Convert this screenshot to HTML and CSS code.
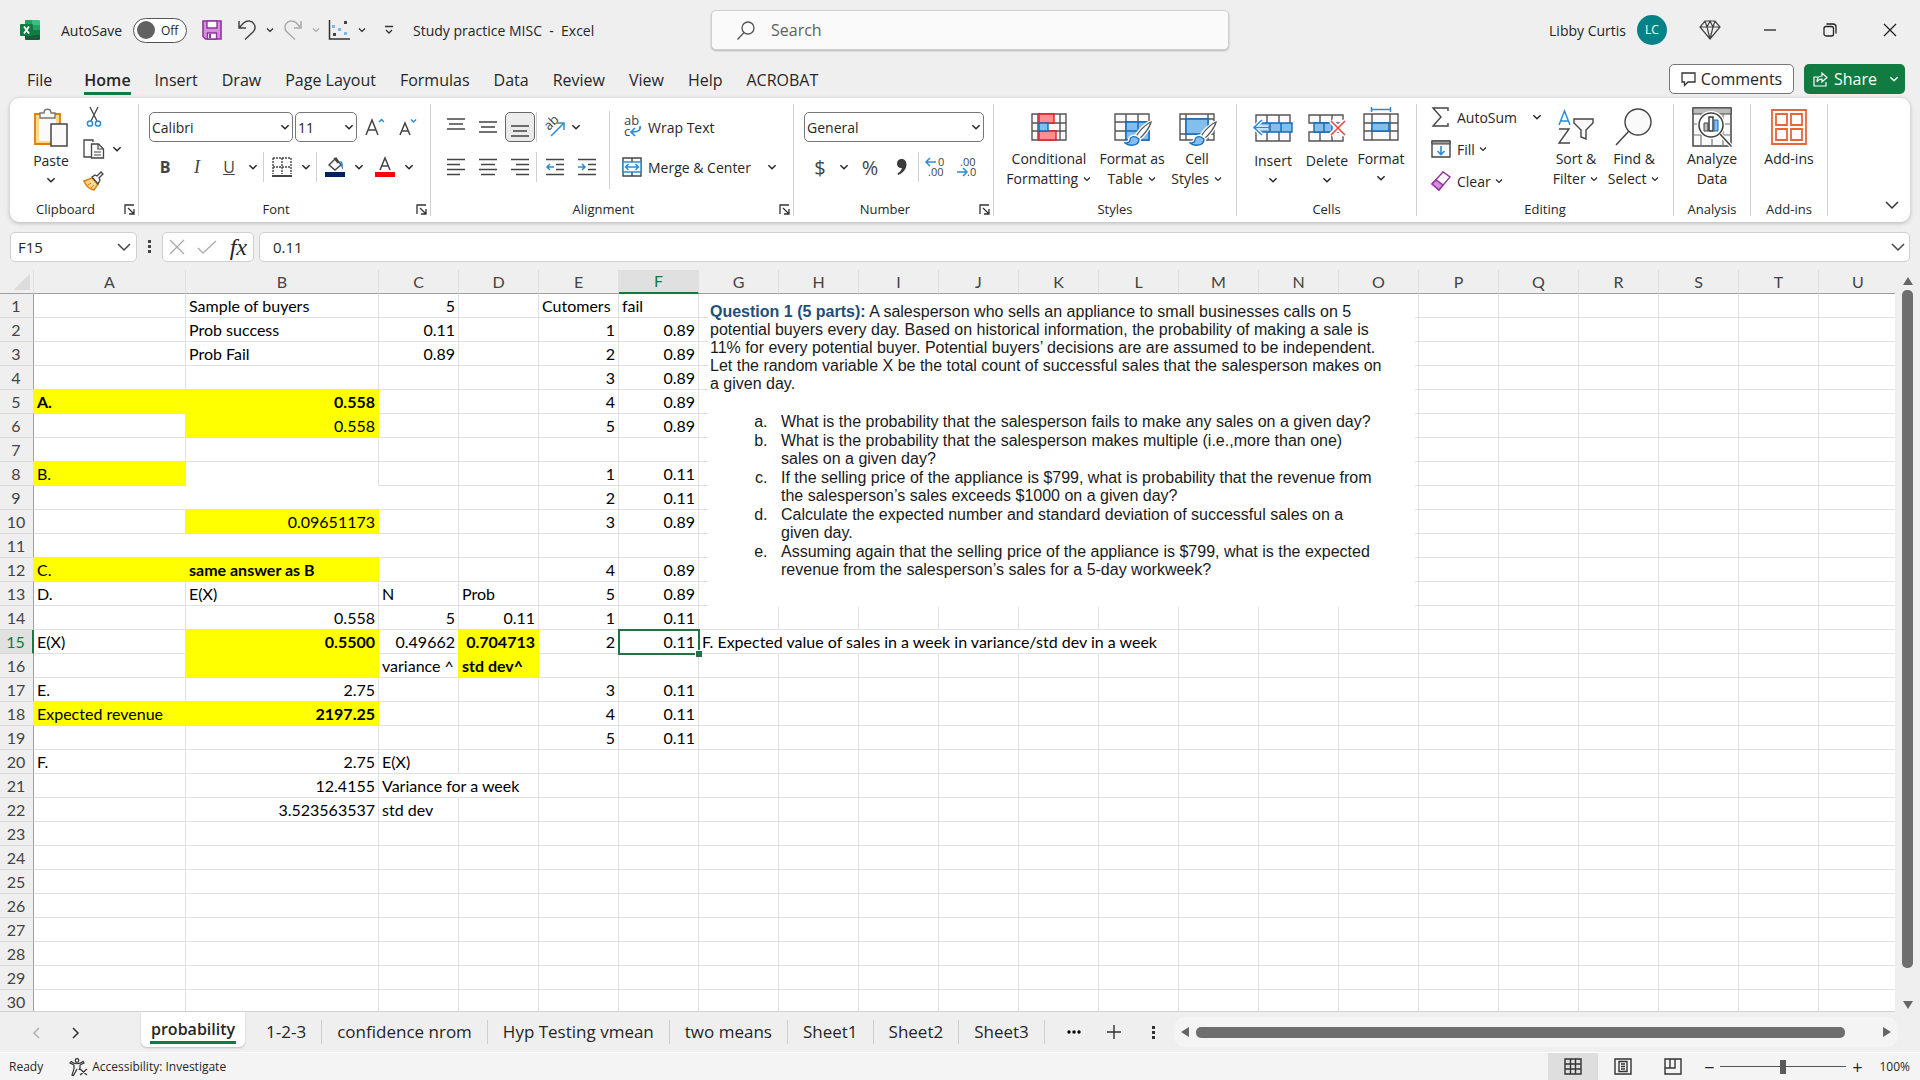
FILE: index.html
```
<!DOCTYPE html>
<html lang="en">
<head>
    <meta charset="UTF-8">
    <title>Study practice MISC - Excel</title>
    <link rel="stylesheet" href="styles.css">
</head>
<body>
    <!-- shared symbols -->
    <svg class="defs" width="0" height="0">
        <symbol id="chev" viewBox="0 0 10 10"><path d="M2 3.5l3 3 3-3" fill="none" stroke="currentColor" stroke-width="1.2"/></symbol>
        <symbol id="launch" viewBox="0 0 11 11"><path d="M1 10V1h9M4 4l6 6M10 5v5H5" fill="none" stroke="#333" stroke-width="1.3"/></symbol>
        <symbol id="brush" viewBox="0 0 28 26">
            <path d="M27 1C22 3 14 11 12 16l3 2C20 14 26 6 27 1z" fill="#fff" stroke="#fff" stroke-width="4"/>
            <path d="M27 1C22 3 14 11 12 16l3 2C20 14 26 6 27 1z" fill="#fff" stroke="#555" stroke-width="1.3"/>
            <path d="M12 16c-3-1-6 0-6 3 0 2-2 3-5 3 3 3 14 4 14-4z" fill="#83beec" stroke="#fff" stroke-width="4"/>
            <path d="M12 16c-3-1-6 0-6 3 0 2-2 3-5 3 3 3 14 4 14-4z" fill="#83beec" stroke="#0f6cbd" stroke-width="1.3"/>
        </symbol>
    </svg>

    <header class="titlebar">
        <div class="title-left">
            <svg class="logo" width="20" height="20" viewBox="0 0 20 20">
                <path d="M5 0h7v5H5z" fill="#21a366"/><path d="M12 0h7q1 0 1 1v4h-8z" fill="#33c481"/>
                <path d="M5 5h7v5H5z" fill="#107c41"/><path d="M12 5h8v5h-8z" fill="#21a366"/>
                <path d="M5 10h7v5H5z" fill="#185c37"/><path d="M12 10h8v5h-8z" fill="#107c41"/>
                <path d="M5 15h15v4q0 1-1 1H6q-1 0-1-1z" fill="#185c37"/>
                <rect y="4" width="13" height="12" rx="1" fill="#107c41"/>
                <path d="M4 6.500l5 7M9 6.500l-5 7" stroke="#fff" stroke-width="1.800"/>
            </svg>
            <label class="autosave">AutoSave
                <span class="toggle"><input type="checkbox"><i></i><span>Off</span></span>
            </label>
            <button class="qat save" aria-label="Save">
                <svg width="20" height="20" viewBox="0 0 20 20"><path d="M1 1h18v18H3.500L1 16.500z" fill="#d48fdc" stroke="#9332a0" stroke-width="1.600"/><path d="M5 1h10v7H5z" fill="#fff" stroke="#9332a0" stroke-width="1.400"/><path d="M5.500 19v-6h9v6z" fill="#fff" stroke="#9332a0" stroke-width="1.400"/><path d="M8 14v4" stroke="#9332a0" stroke-width="2"/></svg>
            </button>
            <button class="qat" aria-label="Undo">
                <svg width="20" height="20" viewBox="0 0 20 20"><path d="M2 1v7h7M2 8l4.500-5C10 0 15 .5 17 4s1 6-1 8l-8 7.500" fill="none" stroke="#444" stroke-width="1.500"/></svg>
            </button>
            <button class="mini" aria-label="Undo list"><svg width="10" height="10"><use href="#chev"/></svg></button>
            <button class="qat faded" aria-label="Redo">
                <svg width="20" height="20" viewBox="0 0 20 20"><path d="M18 1v7h-7M18 8l-4.500-5C10 0 5 .5 3 4s-1 6 1 8l8 7.500" fill="none" stroke="#aaa" stroke-width="1.500"/></svg>
            </button>
            <button class="mini faded" aria-label="Redo list"><svg width="10" height="10"><use href="#chev"/></svg></button>
            <button class="qat" aria-label="Scatter chart">
                <svg width="22" height="20" viewBox="0 0 22 20"><path d="M1.500 0v19H22" fill="none" stroke="#333" stroke-width="1.500"/><path d="M16 1h3v3h-3zM5 13h3v3H5z" fill="#444"/><path d="M4 5h3v3H4zM10 8h3v3h-3zM16 12h3v3h-3z" fill="#76b9ed"/></svg>
            </button>
            <button class="mini" aria-label="Scatter chart list"><svg width="10" height="10"><use href="#chev"/></svg></button>
            <button class="qat more" aria-label="Customize toolbar">
                <svg width="10" height="10" viewBox="0 0 10 10"><path d="M1 1.500h8M2 5l3 3 3-3" fill="none" stroke="#333" stroke-width="1.300"/></svg>
            </button>
            <span class="doc-title">Study practice MISC&nbsp; -&nbsp; Excel</span>
        </div>
        <label class="search">
            <svg width="18" height="19" viewBox="0 0 18 19"><circle cx="11" cy="7" r="6" fill="none" stroke="#555" stroke-width="1.300"/><path d="M7 11.500L.5 18.500" stroke="#555" stroke-width="1.300"/></svg>
            <input type="text" placeholder="Search" aria-label="Search">
        </label>
        <div class="title-right">
            <span class="user">Libby Curtis</span>
            <span class="avatar">LC</span>
            <button class="win" aria-label="Premium"><svg width="22" height="20" viewBox="0 0 22 20"><path d="M6 1h10l5 6-10 12L1 7zM1 7h20M6 1l2 6 3 12 3-12 2-6M8 7l3-6 3 6" fill="none" stroke="#444" stroke-width="1.200"/></svg></button>
            <button class="win" aria-label="Minimize"><svg width="12" height="12"><path d="M0 6h12" stroke="#222" stroke-width="1.300"/></svg></button>
            <button class="win" aria-label="Restore"><svg width="14" height="14" viewBox="0 0 14 14"><rect x="1" y="3.500" width="9.500" height="9.500" rx="2" fill="none" stroke="#222" stroke-width="1.300"/><path d="M3.500 1H10q3 0 3 3v6.500" fill="none" stroke="#222" stroke-width="1.300"/></svg></button>
            <button class="win" aria-label="Close"><svg width="14" height="14"><path d="M1 1l12 12M13 1L1 13" stroke="#222" stroke-width="1.300"/></svg></button>
        </div>
    </header>

    <nav class="menu">
        <a href="#" class="file">File</a>
        <a href="#" class="on">Home</a>
        <a href="#">Insert</a>
        <a href="#">Draw</a>
        <a href="#">Page Layout</a>
        <a href="#">Formulas</a>
        <a href="#">Data</a>
        <a href="#">Review</a>
        <a href="#">View</a>
        <a href="#">Help</a>
        <a href="#">ACROBAT</a>
        <button class="comments"><svg width="15" height="15" viewBox="0 0 15 15"><path d="M1 1h13v9H7l-3.500 3.500V10H1z" fill="none" stroke="#333" stroke-width="1.300"/></svg>Comments</button>
        <button class="share"><svg width="15" height="15" viewBox="0 0 15 15"><path d="M5 5H1v9h12v-4M4 10c0-4 2-6 5-6V1l5 4.500L9 10V7c-2 0-4 1-5 3z" fill="none" stroke="#fff" stroke-width="1.200"/></svg>Share<svg class="share-chev" width="12" height="12"><use href="#chev"/></svg></button>
    </nav>

    <section class="ribbon">
        <div class="group g-clip">
            <div class="tools">
                <button class="big low">
                    <span class="pic"><svg width="36" height="40" viewBox="0 0 36 40"><path d="M2 6h25v30H2z" fill="#ffd98f" stroke="#e07b10" stroke-width="1.800"/><path d="M6 8h17v25H6z" fill="#fafafa"/><path d="M7 10V5h4c0-5 7-5 7 0h4v5z" fill="#fafafa" stroke="#777" stroke-width="1.400"/><path d="M18 16h16v22H18z" fill="#fafafa" stroke="#444" stroke-width="1.500"/></svg></span>
                    Paste<br><svg width="12" height="12"><use href="#chev"/></svg>
                </button>
                <div class="stack">
                    <button class="row-btn" aria-label="Cut"><svg width="16" height="22" viewBox="0 0 16 22"><path d="M4 1l7 14M12 1L5 15" fill="none" stroke="#444" stroke-width="1.300"/><circle cx="4" cy="17.500" r="2.600" fill="none" stroke="#2a8dd4" stroke-width="1.500"/><circle cx="12" cy="17.500" r="2.600" fill="none" stroke="#2a8dd4" stroke-width="1.500"/></svg></button>
                    <button class="row-btn" aria-label="Copy"><svg width="22" height="20" viewBox="0 0 22 20"><path d="M8 18H1V1h9v2" fill="none" stroke="#444" stroke-width="1.300"/><path d="M8.500 5h7l5 5v9h-12z" fill="#fafafa" stroke="#444" stroke-width="1.300"/><path d="M15 5v5h5M11 13h7M11 16h7" fill="none" stroke="#444" stroke-width="1.200"/></svg><svg class="copy-chev" width="12" height="12"><use href="#chev"/></svg></button>
                    <button class="row-btn" aria-label="Format painter"><svg width="22" height="20" viewBox="0 0 22 20"><path d="M1 10l8-3 6 6-4 6c-5-1-8-4-10-9z" fill="#ffd98f" stroke="#e07b10" stroke-width="1.500"/><path d="M5 14l3-2M8 17l3-3" stroke="#e07b10"/><path d="M9 6l3-2 2 1 4-4 2 2-4 4 1 2-2 4z" fill="#fafafa" stroke="#444" stroke-width="1.300"/></svg></button>
                </div>
            </div>
            <div class="group-name"><span>Clipboard</span><button aria-label="Clipboard options"><svg width="11" height="11"><use href="#launch"/></svg></button></div>
        </div>

        <div class="group g-font">
            <div class="tools lines">
                <div class="line">
                    <span class="pick font-pick"><select aria-label="Font"><option>Calibri</option></select><svg width="12" height="12"><use href="#chev"/></svg></span>
                    <span class="pick size-pick"><select aria-label="Font size"><option>11</option></select><svg width="12" height="12"><use href="#chev"/></svg></span>
                    <button class="ic" aria-label="Grow font"><svg width="20" height="20" viewBox="0 0 20 20"><path d="M1 18L7 3l6 15M3 13h8" fill="none" stroke="#444" stroke-width="1.500"/><path d="M14 5l2.500-2.500L19 5" fill="none" stroke="#2a8dd4" stroke-width="1.500"/></svg></button>
                    <button class="ic" aria-label="Shrink font"><svg width="20" height="20" viewBox="0 0 20 20"><path d="M3 18L8 6l5 12M5 14h6" fill="none" stroke="#444" stroke-width="1.500"/><path d="M14 2.500L16.500 5 19 2.500" fill="none" stroke="#2a8dd4" stroke-width="1.500"/></svg></button>
                </div>
                <div class="line">
                    <button class="ic"><b>B</b></button>
                    <button class="ic"><i class="ital">I</i></button>
                    <button class="ic"><u>U</u></button>
                    <button class="mini" aria-label="Underline list"><svg width="12" height="12"><use href="#chev"/></svg></button>
                    <span class="bar"></span>
                    <button class="ic" aria-label="Borders"><svg width="20" height="20" viewBox="0 0 20 20"><path d="M1 1h18M1 10h18M1 1v16M10 1v16M19 1v16" fill="none" stroke="#444" stroke-width="1.400" stroke-dasharray="2 1"/><path d="M0 19h20" stroke="#444" stroke-width="2"/></svg></button>
                    <button class="mini" aria-label="Borders list"><svg width="12" height="12"><use href="#chev"/></svg></button>
                    <span class="bar"></span>
                    <button class="ic" aria-label="Fill color"><svg width="20" height="20" viewBox="0 0 20 20"><path d="M4 8l7-7 5 7-6 5zM9 1l4 5" fill="#fafafa" stroke="#444" stroke-width="1.400"/><path d="M15 4c3 0 3 3 3 9-2-2-2-5-3-9z" fill="#2a8dd4"/><path d="M0 15h20v5H0z" fill="#002060"/></svg></button>
                    <button class="mini" aria-label="Fill list"><svg width="12" height="12"><use href="#chev"/></svg></button>
                    <button class="ic font-color" aria-label="Font color"><svg width="20" height="20" viewBox="0 0 20 20"><path d="M5 13l5-12 5 12M7 9h6" fill="none" stroke="#444" stroke-width="1.500"/><path d="M0 15h20v5H0z" fill="#f00"/></svg></button>
                    <button class="mini" aria-label="Font color list"><svg width="12" height="12"><use href="#chev"/></svg></button>
                </div>
            </div>
            <div class="group-name"><span>Font</span><button aria-label="Font options"><svg width="11" height="11"><use href="#launch"/></svg></button></div>
        </div>

        <div class="group g-align">
            <div class="tools">
                <div class="lines align-left">
                    <div class="line">
                        <button class="ic" aria-label="Top align"><svg width="18" height="20"><path d="M0 2h18M2 7h14M0 12h18" stroke="#444" stroke-width="1.400"/></svg></button>
                        <button class="ic" aria-label="Middle align"><svg width="18" height="20"><path d="M0 5h18M2 10h14M0 15h18" stroke="#444" stroke-width="1.400"/></svg></button>
                        <button class="ic pressed" aria-label="Bottom align"><svg width="18" height="20"><path d="M0 9h18M2 14h14M0 19h18" stroke="#444" stroke-width="1.400"/></svg></button>
                        <span class="bar"></span>
                        <button class="ic" aria-label="Orientation"><svg width="22" height="22" viewBox="0 0 22 22"><text x="5" y="15" transform="rotate(-45 5 15)" class="svg-ab">ab</text><path d="M7 20L19 8M13 7h7v7" fill="none" stroke="#2a8dd4" stroke-width="1.500"/></svg></button>
                        <button class="mini" aria-label="Orientation list"><svg width="12" height="12"><use href="#chev"/></svg></button>
                    </div>
                    <div class="line">
                        <button class="ic" aria-label="Align left"><svg width="18" height="18"><path d="M0 1.500h18M0 6.500h13M0 11.500h18M0 16.500h13" stroke="#444" stroke-width="1.500"/></svg></button>
                        <button class="ic" aria-label="Center"><svg width="18" height="18"><path d="M0 1.500h18M2 6.500h14M0 11.500h18M2 16.500h14" stroke="#444" stroke-width="1.500"/></svg></button>
                        <button class="ic" aria-label="Align right"><svg width="18" height="18"><path d="M0 1.500h18M5 6.500h13M0 11.500h18M5 16.500h13" stroke="#444" stroke-width="1.500"/></svg></button>
                        <span class="bar"></span>
                        <button class="ic" aria-label="Decrease indent"><svg width="18" height="18"><path d="M0 1.500h18M10 6.500h8M10 11.500h8M0 16.500h18" stroke="#444" stroke-width="1.500"/><path d="M8 9H1M4 6L1 9l3 3" fill="none" stroke="#2a8dd4" stroke-width="1.500"/></svg></button>
                        <button class="ic" aria-label="Increase indent"><svg width="18" height="18"><path d="M0 1.500h18M10 6.500h8M10 11.500h8M0 16.500h18" stroke="#444" stroke-width="1.500"/><path d="M0 9h7M4 6l3 3-3 3" fill="none" stroke="#2a8dd4" stroke-width="1.500"/></svg></button>
                    </div>
                </div>
                <span class="tall-bar"></span>
                <div class="lines align-right">
                    <button class="text-btn"><svg width="20" height="22" viewBox="0 0 20 22"><text x="2" y="9" class="svg-ab">ab</text><text x="2" y="20" class="svg-ab">c</text><path d="M18 10c1 5-3 6-8 6M13 12l-4 4 4 4" fill="none" stroke="#2a8dd4" stroke-width="1.700"/></svg>Wrap Text</button>
                    <button class="text-btn"><svg width="20" height="20" viewBox="0 0 20 20"><path d="M1 1h18v18H1zM10 1v18" fill="none" stroke="#444" stroke-width="1.400"/><path d="M1 5h18v10H1z" fill="#fafafa" stroke="#2a8dd4" stroke-width="1.500"/><path d="M4 10h12M6.500 7L3.500 10l3 3M13.500 7l3 3-3 3" fill="none" stroke="#2a8dd4" stroke-width="1.400"/></svg>Merge &amp; Center<svg class="push" width="12" height="12"><use href="#chev"/></svg></button>
                </div>
            </div>
            <div class="group-name"><span>Alignment</span><button aria-label="Alignment options"><svg width="11" height="11"><use href="#launch"/></svg></button></div>
        </div>

        <div class="group g-num">
            <div class="tools lines">
                <div class="line">
                    <span class="pick num-pick"><select aria-label="Number format"><option>General</option></select><svg width="12" height="12"><use href="#chev"/></svg></span>
                </div>
                <div class="line">
                    <button class="ic sign">$</button>
                    <button class="mini" aria-label="Currency list"><svg width="12" height="12"><use href="#chev"/></svg></button>
                    <button class="ic sign pct">%</button>
                    <button class="ic" aria-label="Comma style"><svg width="10" height="16" viewBox="0 0 10 16"><path d="M4.500 0C8 0 9.500 2.500 9.500 5.500 9.500 10 6 14 1 16l-.5-1.500C3 13 4.500 11 5 9 2 9.500 0 7.500 0 4.800 0 2 2 0 4.500 0z" fill="#3a3a3a"/></svg></button>
                    <span class="bar"></span>
                    <button class="ic" aria-label="Increase decimal"><svg width="20" height="22" viewBox="0 0 20 22"><text x="13" y="10" class="svg-num">0</text><text x="3" y="20" class="svg-num">.00</text><path d="M11 6H1M5 2L1 6l4 4" fill="none" stroke="#2a8dd4" stroke-width="1.500"/></svg></button>
                    <button class="ic" aria-label="Decrease decimal"><svg width="20" height="22" viewBox="0 0 20 22"><text x="3" y="10" class="svg-num">.00</text><text x="10" y="20" class="svg-num">.0</text><path d="M0 16h10M6 12l4 4-4 4" fill="none" stroke="#2a8dd4" stroke-width="1.500"/></svg></button>
                </div>
            </div>
            <div class="group-name"><span>Number</span><button aria-label="Number options"><svg width="11" height="11"><use href="#launch"/></svg></button></div>
        </div>

        <div class="group g-styles">
            <div class="tools">
                <button class="big w-cond">
                    <span class="pic"><svg width="36" height="30" viewBox="0 0 36 30"><path d="M1 2h34v26H1zM7 2v26M29 2v26M1 11h34M1 19h34" fill="#fafafa" stroke="#555" stroke-width="1.400"/><path d="M8 2h15v9H8zM8 19h17v9H8z" fill="#ff8f8f" stroke="#e02020" stroke-width="1.400"/><path d="M8 11h9v8H8z" fill="#83beec" stroke="#0f6cbd" stroke-width="1.400"/></svg></span>
                    Conditional<br>Formatting <svg width="10" height="10"><use href="#chev"/></svg>
                </button>
                <button class="big w-table">
                    <span class="pic"><svg width="36" height="36" viewBox="0 0 36 36"><path d="M1 5h34v26H1zM12 5v26M24 5v26M1 13h34M1 22h34" fill="#fafafa" stroke="#555" stroke-width="1.400"/><path d="M12 13h23v18H12zM24 13v18M12 22h23" fill="#83beec" stroke="#0f6cbd" stroke-width="1.400"/><use href="#brush" x="10" y="12" width="28" height="26"/></svg></span>
                    Format as<br>Table <svg width="10" height="10"><use href="#chev"/></svg>
                </button>
                <button class="big w-cell">
                    <span class="pic"><svg width="36" height="36" viewBox="0 0 36 36"><path d="M1 5h34v26H1zM7 5v26M29 5v26M1 10h34M1 25h34" fill="#fafafa" stroke="#555" stroke-width="1.400"/><path d="M7 10h22v15H7z" fill="#83beec" stroke="#0f6cbd" stroke-width="1.400"/><use href="#brush" x="10" y="12" width="28" height="26"/></svg></span>
                    Cell<br>Styles <svg width="10" height="10"><use href="#chev"/></svg>
                </button>
            </div>
            <div class="group-name"><span>Styles</span></div>
        </div>

        <div class="group g-cells">
            <div class="tools">
                <button class="big low">
                    <span class="pic"><svg width="40" height="30" viewBox="0 0 40 30"><path d="M3 2h34v26H3zM14 2v26M26 2v26" fill="#fafafa" stroke="#555" stroke-width="1.400"/><path d="M6 10h33v9H6zM17 10v9M28 10v9" fill="#83beec" stroke="#0f6cbd" stroke-width="1.400"/><path d="M15 14.500H2M9 7l-8 7.500L9 22" fill="none" stroke="#fff" stroke-width="4"/><path d="M17 14.500H2M9 7l-8 7.500L9 22" fill="none" stroke="#2a8dd4" stroke-width="1.600"/></svg></span>
                    Insert<br><svg width="12" height="12"><use href="#chev"/></svg>
                </button>
                <button class="big low">
                    <span class="pic"><svg width="38" height="30" viewBox="0 0 38 30"><path d="M1 2h34v8H1zM1 19h34v9H1zM12 2v8M24 2v8M12 19v9M24 19v9" fill="#fafafa" stroke="#555" stroke-width="1.400"/><path d="M6 10h18v9H6zM16 10v9" fill="#83beec" stroke="#0f6cbd" stroke-width="1.400"/><path d="M23 8l14 14M37 8L23 22" stroke="#fff" stroke-width="5"/><path d="M23 8l14 14M37 8L23 22" stroke="#f04545" stroke-width="1.600"/></svg></span>
                    Delete<br><svg width="12" height="12"><use href="#chev"/></svg>
                </button>
                <button class="big">
                    <span class="pic"><svg width="36" height="40" viewBox="0 0 36 40"><path d="M1 7h34v26H1zM9 7v26M27 7v26M1 16h34M1 24h34" fill="#fafafa" stroke="#555" stroke-width="1.400"/><path d="M9 16h17v8H9z" fill="#83beec" stroke="#0f6cbd" stroke-width="1.400"/><path d="M9 2.500h18M8.500 0v5M27.500 0v5" stroke="#2a8dd4" stroke-width="1.500"/></svg></span>
                    Format<br><svg width="12" height="12"><use href="#chev"/></svg>
                </button>
            </div>
            <div class="group-name"><span>Cells</span></div>
        </div>

        <div class="group g-edit">
            <div class="tools">
                <div class="stack edit-stack">
                    <button class="text-btn"><svg width="20" height="20" viewBox="0 0 20 20"><path d="M17 4V1H2l8 9-8 9h15v-3" fill="none" stroke="#444" stroke-width="1.400"/></svg>AutoSum<svg class="push" width="12" height="12"><use href="#chev"/></svg></button>
                    <button class="text-btn"><svg width="20" height="18" viewBox="0 0 20 18"><path d="M1 1h18v16H1z" fill="#fafafa" stroke="#444" stroke-width="1.400"/><path d="M1 1h18v3H1z" fill="#999" stroke="#444"/><path d="M10 6v8M6.500 11l3.500 3.500 3.500-3.500" fill="none" stroke="#2a8dd4" stroke-width="1.600"/></svg>Fill<svg class="near" width="10" height="10"><use href="#chev"/></svg></button>
                    <button class="text-btn"><svg width="20" height="20" viewBox="0 0 20 20"><path d="M1 13L12 1l7 5L8 19z" fill="#fff" stroke="#9332a0" stroke-width="1.400"/><path d="M1 13l4-4 7 5-4 5z" fill="#d48fdc" stroke="#9332a0" stroke-width="1.400"/></svg>Clear<svg class="near" width="10" height="10"><use href="#chev"/></svg></button>
                </div>
                <button class="big w-sort">
                    <span class="pic"><svg width="36" height="36" viewBox="0 0 36 36"><path d="M1 16L6.500 2 12 16M3 12h7" fill="none" stroke="#2a8dd4" stroke-width="1.500"/><path d="M1 20h10L1 34h11" fill="none" stroke="#444" stroke-width="1.400"/><path d="M16 10h19v4l-7 7v9l-5-2v-7l-7-7z" fill="#fafafa" stroke="#444" stroke-width="1.400"/></svg></span>
                    Sort &amp;<br>Filter <svg width="10" height="10"><use href="#chev"/></svg>
                </button>
                <button class="big w-find">
                    <span class="pic"><svg width="38" height="38" viewBox="0 0 38 38"><circle cx="23" cy="14" r="13" fill="#fafafa" stroke="#444" stroke-width="1.400"/><path d="M14 23L1 37" stroke="#444" stroke-width="1.500"/></svg></span>
                    Find &amp;<br>Select <svg width="10" height="10"><use href="#chev"/></svg>
                </button>
            </div>
            <div class="group-name"><span>Editing</span></div>
        </div>

        <div class="group g-one">
            <div class="tools">
                <button class="big w-full">
                    <span class="pic"><svg width="40" height="40" viewBox="0 0 40 40"><path d="M1 1h38v38H1z" fill="#fafafa" stroke="#444" stroke-width="1.500"/><path d="M1 1h38v6H1z" fill="#bbb" stroke="#444"/><path d="M1 17h38M1 28h38M9 7v32M20 7v32M31 7v32" stroke="#777" stroke-width="1.200"/><circle cx="19" cy="18" r="14" fill="#fff"/><circle cx="19" cy="18" r="12" fill="#fff" stroke="#444" stroke-width="1.600"/><path d="M28 27l11 12" stroke="#fff" stroke-width="4"/><path d="M28 27l11 12" stroke="#444" stroke-width="1.600"/><path d="M12 16h4v8h-4z" fill="#bbb" stroke="#444"/><path d="M17 10h4v14h-4z" fill="#fafafa" stroke="#333" stroke-width="1.400"/><path d="M22 13h4v11h-4z" fill="#83beec" stroke="#0f6cbd"/></svg></span>
                    Analyze<br>Data
                </button>
            </div>
            <div class="group-name"><span>Analysis</span></div>
        </div>

        <div class="group g-one">
            <div class="tools">
                <button class="big w-full">
                    <span class="pic"><svg width="36" height="36" viewBox="0 0 36 36"><path d="M1 1h34v34H1zM5 5h11v11H5zM20 5h11v11H20zM5 20h11v11H5zM20 20h11v11H20z" fill="#fff" stroke="#e8653a" stroke-width="1.800"/></svg></span>
                    Add-ins
                </button>
            </div>
            <div class="group-name"><span>Add-ins</span></div>
        </div>

        <button class="collapse" aria-label="Collapse ribbon"><svg width="14" height="10" viewBox="0 0 14 10"><path d="M1 2l6 6 6-6" fill="none" stroke="#333" stroke-width="1.500"/></svg></button>
    </section>

    <section class="formula-row">
        <div class="name-box">
            <input type="text" value="F15" aria-label="Name box">
            <svg width="14" height="10" viewBox="0 0 14 10"><path d="M1 2l6 6 6-6" fill="none" stroke="#444" stroke-width="1.500"/></svg>
        </div>
        <svg class="dots" width="4" height="16"><path d="M0 1h3v3H0zM0 6h3v3H0zM0 11h3v3H0z" fill="#444"/></svg>
        <div class="fx-box">
            <button aria-label="Cancel"><svg width="16" height="16"><path d="M1 1l14 14M15 1L1 15" stroke="#aaa" stroke-width="1.300"/></svg></button>
            <button aria-label="Enter"><svg width="20" height="14"><path d="M1 8l5 5L19 1" fill="none" stroke="#aaa" stroke-width="1.300"/></svg></button>
            <button class="fx">fx</button>
        </div>
        <div class="formula-box">
            <input type="text" value="0.11" aria-label="Formula">
            <svg width="14" height="10" viewBox="0 0 14 10"><path d="M1 2l6 6 6-6" fill="none" stroke="#444" stroke-width="1.500"/></svg>
        </div>
    </section>

    <main class="work">
        <div class="sheet">
            <table id="grid"></table>
            <article class="question">
                <p><strong>Question 1 (5 parts):</strong> A salesperson who sells an appliance to small businesses calls on 5<br>
                potential buyers every day. Based on historical information, the probability of making a sale is<br>
                11% for every potential buyer. Potential buyers’ decisions are are assumed to be independent.<br>
                Let the random variable X be the total count of successful sales that the salesperson makes on<br>
                a given day.</p>
                <ol>
                    <li>What is the probability that the salesperson fails to make any sales on a given day?</li>
                    <li>What is the probability that the salesperson makes multiple (i.e.,more than one)<br>sales on a given day?</li>
                    <li>If the selling price of the appliance is $799, what is probability that the revenue from<br>the salesperson’s sales exceeds $1000 on a given day?</li>
                    <li>Calculate the expected number and standard deviation of successful sales on a<br>given day.</li>
                    <li>Assuming again that the selling price of the appliance is $799, what is the expected<br>revenue from the salesperson’s sales for a 5-day workweek?</li>
                </ol>
            </article>
        </div>
        <div class="vscroll">
            <svg width="12" height="10"><path d="M6 1l5 8H1z" fill="#666"/></svg>
            <span class="vthumb"></span>
            <svg width="12" height="10"><path d="M6 9l5-8H1z" fill="#666"/></svg>
        </div>
    </main>

    <nav class="sheets">
        <button class="nav-arrow" aria-label="Previous sheet"><svg width="8" height="12"><path d="M7 1L2 6l5 5" fill="none" stroke="#aaa" stroke-width="1.300"/></svg></button>
        <button class="nav-arrow" aria-label="Next sheet"><svg width="8" height="12"><path d="M1 1l5 5-5 5" fill="none" stroke="#333" stroke-width="1.500"/></svg></button>
        <a href="#" class="tab current"><span>probability</span></a>
        <a href="#" class="tab">1-2-3</a>
        <a href="#" class="tab">confidence nrom</a>
        <a href="#" class="tab">Hyp Testing vmean</a>
        <a href="#" class="tab">two means</a>
        <a href="#" class="tab">Sheet1</a>
        <a href="#" class="tab">Sheet2</a>
        <a href="#" class="tab">Sheet3</a>
        <div class="sheet-tools">
            <button class="sheet-btn" aria-label="More sheets"><svg width="14" height="4"><circle cx="2" cy="2" r="1.700"/><circle cx="7" cy="2" r="1.700"/><circle cx="12" cy="2" r="1.700"/></svg></button>
            <button class="sheet-btn" aria-label="New sheet"><svg width="14" height="14"><path d="M7 0v14M0 7h14" stroke="#333" stroke-width="1.400"/></svg></button>
            <span class="sheet-btn"><svg width="4" height="14"><path d="M0 1h3v3H0zM0 6h3v3H0zM0 11h3v3H0z" fill="#333"/></svg></span>
        </div>
        <div class="hscroll">
            <svg width="10" height="12"><path d="M1 6l8-5v10z" fill="#666"/></svg>
            <span class="hthumb"></span>
            <svg width="10" height="12"><path d="M9 6L1 1v10z" fill="#666"/></svg>
        </div>
    </nav>

    <footer class="status">
        <span>Ready</span>
        <button class="access"><svg width="18" height="18" viewBox="0 0 18 18"><circle cx="7" cy="2.500" r="1.800" fill="none" stroke="#333" stroke-width="1.200"/><path d="M1 3.500c3 3 9 3 12 0l1 1.500-4 2v3l-1 2M1 3.500L0 5l4 2v4l-2 6 1.500.5L7 11M10 11l7 6M17 11l-7 6" fill="none" stroke="#333" stroke-width="1.200"/></svg>Accessibility: Investigate</button>
        <div class="views">
            <button class="view on" aria-label="Normal view"><svg width="18" height="17"><path d="M1 1h16v15H1zM6.500 1v15M11.500 1v15M1 6h16M1 11h16" fill="none" stroke="#333" stroke-width="1.400"/></svg></button>
            <button class="view" aria-label="Page layout view"><svg width="18" height="17"><path d="M1 1h16v15H1zM5 3.500h8v10H5zM7 6h4M7 8.500h4M7 11h4" fill="none" stroke="#333" stroke-width="1.400"/></svg></button>
            <button class="view" aria-label="Page break view"><svg width="18" height="17"><path d="M1 1h16v15H1zM1 10h10V1M6 1v9" fill="none" stroke="#333" stroke-width="1.400"/></svg></button>
        </div>
        <button class="zoom-btn">−</button>
        <input class="zoom" type="range" min="0" max="100" value="50" aria-label="Zoom">
        <button class="zoom-btn">+</button>
        <span class="percent">100%</span>
    </footer>

    <script src="sheet.js"></script>
</body>
</html>
```
FILE: styles.css
```
* {
    box-sizing: border-box;
}
body {
    margin: 0;
    height: 100vh;
    display: flex;
    flex-direction: column;
    overflow: hidden;
    background-color: #efefef;
    color: #262626;
    font-family: "Open Sans", "Noto Sans", sans-serif;
    font-size: 14px;
}
button {
    border: none;
    background: none;
    padding: 0;
    margin: 0;
    font: inherit;
    color: inherit;
    white-space: nowrap;
}
a {
    color: inherit;
    text-decoration: none;
    white-space: nowrap;
}
input, select {
    font: inherit;
    color: inherit;
}
svg {
    flex: none;
    overflow: visible;
}
.defs {
    position: absolute;
}

/* title bar */
.titlebar {
    display: flex;
    align-items: center;
    height: 60px;
    flex: none;
}
.title-left {
    display: flex;
    align-items: center;
    width: 711px;
    padding-left: 20px;
}
.autosave {
    display: flex;
    align-items: center;
    gap: 8px;
    margin-left: 21px;
    width: 126px;
    justify-content: space-between;
}
.toggle {
    display: flex;
    align-items: center;
    width: 54px;
    height: 25px;
    padding-left: 3px;
    border: 1px solid #555;
    border-radius: 13px;
    background-color: #fff;
    font-size: 12px;
    gap: 6px;
}
.toggle input {
    appearance: none;
    margin: 0;
    width: 0;
}
.toggle i {
    width: 18px;
    height: 18px;
    margin-left: -6px;
    border-radius: 50%;
    background-color: #616161;
}
.qat {
    width: 30px;
    height: 30px;
    display: flex;
    align-items: center;
    justify-content: center;
}
.save {
    margin-left: 10px;
    margin-right: 5px;
}
.mini {
    width: 16px;
    height: 30px;
    display: flex;
    align-items: center;
    justify-content: center;
}
.faded {
    color: #aaa;
}
.title-left .qat.more {
    margin-left: 4px;
}
.doc-title {
    margin-left: 9px;
    white-space: pre;
}
.search {
    display: flex;
    align-items: center;
    flex: 1;
    max-width: 518px;
    height: 40px;
    padding-left: 25px;
    gap: 16px;
    background-color: #fafafa;
    border: 1px solid #d0d0d0;
    border-radius: 5px;
    box-shadow: 0 1px 2px rgba(0,0,0,0.25);
}
.search input {
    border: none;
    background: none;
    outline: none;
    flex: 1;
    padding: 0;
    font-size: 16px;
}
.search input::placeholder {
    color: #616161;
}
.title-right {
    display: flex;
    align-items: center;
    margin-left: auto;
}
.user {
    margin-right: 11px;
}
.avatar {
    width: 30px;
    height: 30px;
    line-height: 30px;
    margin-right: 13px;
    border-radius: 50%;
    background-color: #038387;
    color: #fff;
    font-size: 12px;
    text-align: center;
}
.win {
    width: 60px;
    height: 40px;
    display: flex;
    align-items: center;
    justify-content: center;
}

/* menu */
.menu {
    display: flex;
    align-items: center;
    gap: 24px;
    height: 38px;
    padding: 0 15px 0 27px;
    flex: none;
    font-size: 16px;
}
.menu a {
    height: 31px;
    line-height: 33px;
}
.menu .file {
    margin-right: 8px;
}
.menu .on {
    font-weight: 600;
    border-bottom: 3px solid #107c41;
}
.comments, .share {
    display: flex;
    align-items: center;
    height: 30px;
    border-radius: 5px;
}
.comments {
    margin-left: auto;
    margin-right: -14px;
    width: 125px;
    justify-content: center;
    gap: 5px;
    border: 1px solid #777;
    background-color: #fff;
}
.share {
    width: 101px;
    padding: 0 5px 0 9px;
    gap: 6px;
    background-color: #107c41;
    color: #fff;
}
.share-chev {
    margin-left: auto;
}

/* ribbon */
.ribbon {
    display: flex;
    position: relative;
    flex: none;
    height: 124px;
    margin: 0 10px;
    padding: 6px 0;
    background-color: #fff;
    border-radius: 9px;
    box-shadow: 0 1px 4px rgba(0,0,0,0.25);
}
.group {
    display: flex;
    flex-direction: column;
    justify-content: space-between;
    border-right: 1px solid #d0d0d0;
}
.g-clip { width: 129px; }
.g-font { width: 292px; }
.g-align { width: 363px; }
.g-num { width: 200px; }
.g-styles { width: 243px; }
.g-cells { width: 180px; }
.g-edit { width: 257px; }
.g-one { width: 77px; }
.tools {
    display: flex;
}
.g-clip .tools { padding-left: 10px; }
.g-font .tools { padding-left: 10px; }
.g-align .tools { padding-left: 9px; }
.g-num .tools { padding-left: 10px; }
.g-styles .tools { padding-left: 8px; }
.g-cells .tools { padding-left: 9px; }
.g-edit .tools { padding-left: 14px; }
.group-name {
    display: flex;
    align-items: center;
    height: 14px;
    font-size: 13px;
    line-height: 14px;
}
.group-name span {
    flex: 1;
    text-align: center;
}
.group-name button {
    display: flex;
    justify-content: center;
    width: 17px;
}
.big {
    width: 54px;
    line-height: 20px;
    text-align: center;
    align-self: flex-start;
}
.g-clip .big { width: 62px; }
.w-cond { width: 94px; }
.w-table { width: 72px; }
.w-cell { width: 58px; }
.w-sort { width: 56px; }
.w-find { width: 60px; }
.w-full { width: 100%; }
.pic {
    display: flex;
    align-items: center;
    justify-content: center;
    height: 45px;
}
.low .pic {
    height: 47px;
}
.stack {
    display: flex;
    flex-direction: column;
    gap: 6px;
}
.row-btn {
    display: flex;
    align-items: center;
    height: 26px;
}
.row-btn svg:first-child {
    width: 24px;
}
.copy-chev {
    margin-left: 5px;
}
.lines {
    display: flex;
    flex-direction: column;
    gap: 10px;
    padding-top: 8px;
}
.line {
    display: flex;
    align-items: center;
    height: 30px;
}
.ic {
    width: 32px;
    height: 30px;
    display: flex;
    align-items: center;
    justify-content: center;
    font-size: 16px;
    color: #444;
}
.ital {
    font-family: "Liberation Serif", serif;
    font-size: 18px;
}
.sign {
    font-size: 20px;
}
.pct {
    margin-left: 2px;
}
.pressed {
    width: 30px;
    margin: 0 1px;
    border: 1px solid #666;
    border-radius: 5px;
    background-color: #ebebeb;
}
.bar {
    width: 1px;
    height: 30px;
    margin: 0 2px;
    background-color: #d0d0d0;
}
.g-num .bar {
    margin: 0;
}
.font-color {
    margin-left: 2px;
}
.align-left .bar {
    margin: 0 2px 0 0;
}
.align-left {
    width: 169px;
}
.align-left .mini {
    margin-left: -3px;
}
.tall-bar {
    width: 1px;
    height: 78px;
    margin-top: 7px;
    background-color: #d0d0d0;
}
.align-right {
    flex: 1;
    padding-left: 12px;
    padding-right: 15px;
}
.text-btn {
    display: flex;
    align-items: center;
    height: 30px;
    gap: 6px;
}
.push {
    margin-left: auto;
}
.near {
    margin-left: -3px;
}
.edit-stack {
    width: 117px;
}
.edit-stack .text-btn {
    height: 26px;
    width: 112px;
}
.pick {
    position: relative;
    height: 30px;
    margin-right: 2px;
}
.pick select {
    appearance: none;
    width: 100%;
    height: 30px;
    padding: 0 2px;
    border: 1px solid #777;
    border-radius: 5px;
    background-color: #fff;
}
.pick svg {
    position: absolute;
    right: 2px;
    top: 9px;
    pointer-events: none;
}
.font-pick { width: 144px; }
.size-pick { width: 62px; }
.num-pick { width: 180px; }
.svg-ab {
    font-family: "Open Sans", sans-serif;
    font-size: 13px;
    fill: #444;
}
.svg-num {
    font-family: "Open Sans", sans-serif;
    font-size: 11px;
    fill: #444;
}
.collapse {
    margin: auto 11px 2px auto;
}

/* formula bar */
.formula-row {
    display: flex;
    align-items: center;
    flex: none;
    height: 48px;
    padding: 2px 10px 0;
    font-size: 15px;
}
.name-box, .fx-box, .formula-box {
    display: flex;
    align-items: center;
    height: 30px;
    border: 1px solid #d0d0d0;
    border-radius: 5px;
    background-color: #fff;
}
.name-box {
    width: 127px;
    padding: 0 5px 0 7px;
}
.name-box input, .formula-box input {
    flex: 1;
    width: 50px;
    padding: 0;
    border: none;
    outline: none;
    background: none;
}
.dots {
    margin: 0 10px 0 11px;
}
.fx-box {
    width: 92px;
    margin-right: 5px;
    padding: 0 6px;
    justify-content: space-between;
}
.fx-box button {
    display: flex;
}
.fx {
    font-family: "Liberation Serif", serif;
    font-style: italic;
    font-size: 24px;
    line-height: 24px;
}
.formula-box {
    flex: 1;
    padding: 0 4px 0 13px;
}

/* worksheet */
.work {
    display: flex;
    flex: 1;
    min-height: 0;
}
.sheet {
    position: relative;
    flex: 1;
    overflow: hidden;
    border-bottom: 1px solid #d0d0d0;
    background-color: #fff;
}
#grid {
    table-layout: fixed;
    width: calc(100% + 3px);
    border-spacing: 0;
    font-family: Lato, "Noto Sans", sans-serif;
    font-size: 16px;
    line-height: 20px;
    color: #000;
}
#grid th {
    height: 24px;
    padding: 0;
    font-weight: normal;
    color: #444;
    background-color: #efefef;
    border-right: 1px solid #e0e0e0;
    border-bottom: 1px solid #a0a0a0;
}
#grid tbody th {
    border-right-color: #a0a0a0;
    border-bottom-color: #d8d8d8;
    padding-right: 1px;
}
#grid .corner {
    background: linear-gradient(135deg, transparent 50%, #dcdcdc 50%) no-repeat 14px 4px / 16px 16px #efefef;
}
#grid thead .hot {
    background-color: #e0e0e0;
    color: #107c41;
    border-bottom: 2px solid #107c41;
}
#grid tbody .hot {
    background-color: #e0e0e0;
    color: #107c41;
    border-right: 2px solid #107c41;
}
#grid td {
    height: 24px;
    padding: 1px 3px 0 3px;
    white-space: nowrap;
    border-right: 1px solid #e0e0e0;
    border-bottom: 1px solid #e0e0e0;
}
#grid .num {
    text-align: right;
}
#grid .fill {
    background-color: #ff0;
    border-color: #ff0;
    box-shadow: -1px -1px 0 #ff0;
}
#grid .bold {
    font-weight: bold;
}
#grid .spill {
    border-right-color: transparent;
}
#grid .open {
    border-bottom-color: transparent;
}
#grid .active {
    position: relative;
    outline: 2px solid #217346;
    outline-offset: -1px;
}
#grid .active::after {
    content: "";
    position: absolute;
    right: -4px;
    bottom: -4px;
    width: 6px;
    height: 6px;
    border: 1px solid #fff;
    border-width: 1px 0 0 1px;
    background-color: #217346;
}
.question {
    position: absolute;
    left: 708px;
    top: 25px;
    width: 707px;
    height: 312px;
    padding: 8px 0 0 2px;
    background-color: #fff;
    color: #1a1a1a;
    font-family: "Liberation Sans", Arial, sans-serif;
    font-size: 16px;
    line-height: 18px;
    white-space: nowrap;
}
.question p {
    margin: 0 0 20px;
}
.question strong {
    color: #1f4e79;
}
.question ol {
    margin: 0;
    padding-left: 62px;
    list-style: lower-alpha;
}
.question li {
    margin-bottom: 1px;
    padding-left: 9px;
}
.vscroll {
    display: flex;
    flex-direction: column;
    align-items: center;
    width: 25px;
    padding: 6px 0 2px;
    gap: 4px;
}
.vthumb {
    flex: 1;
    width: 11px;
    margin-bottom: 28px;
    border-radius: 5px;
    background-color: #6e6e6e;
}

/* sheet tabs */
.sheets {
    display: flex;
    align-items: center;
    flex: none;
    height: 40px;
    padding: 0 22px 0 16px;
    font-size: 17px;
}
.nav-arrow {
    width: 40px;
}
.tab {
    height: 24px;
    line-height: 24px;
    padding: 0 15px;
    border-right: 1px solid #d0d0d0;
}
.tab.current {
    align-self: flex-start;
    height: 35px;
    margin: 0 6px 0 45px;
    padding: 5px 9px 0;
    border: none;
    border-radius: 0 0 6px 6px;
    background-color: #fff;
    box-shadow: 0 1px 2px rgba(0,0,0,0.2);
    font-size: 16px;
    font-weight: 600;
}
.tab.current span {
    display: block;
    padding: 0 1px;
    border-bottom: 3px solid #107c41;
}
.sheet-tools {
    display: flex;
    margin-left: 9px;
}
.sheet-btn {
    display: flex;
    align-items: center;
    justify-content: center;
    width: 40px;
    height: 30px;
}
.hscroll {
    display: flex;
    align-items: center;
    flex: 1;
    height: 30px;
    padding: 0 6px;
    gap: 6px;
    border-radius: 10px;
    background-color: #f4f4f4;
}
.hthumb {
    flex: 1;
    height: 11px;
    margin-right: 31px;
    border-radius: 5px;
    background-color: #6e6e6e;
}

/* status bar */
.status {
    display: flex;
    align-items: center;
    flex: none;
    height: 28px;
    padding: 0 10px 0 9px;
    border-top: 1px solid #fff;
    background-color: #f4f4f4;
    font-size: 12px;
}
.access {
    display: flex;
    align-items: center;
    gap: 4px;
    margin-left: 27px;
}
.views {
    display: flex;
    align-self: stretch;
    margin-left: auto;
}
.view {
    display: flex;
    align-items: center;
    justify-content: center;
    width: 50px;
}
.view.on {
    background-color: #dedede;
}
.zoom-btn {
    width: 22px;
    font-size: 18px;
    line-height: 20px;
}
.zoom {
    appearance: none;
    width: 126px;
    height: 14px;
    margin: 0;
    background: linear-gradient(#555, #555) no-repeat center / 100% 1px;
}
.zoom::-webkit-slider-thumb {
    appearance: none;
    width: 6px;
    height: 14px;
    background-color: #5a5a5a;
}
.percent {
    margin-left: 11px;
}
```
FILE: sheet.js
```
const columns = 'ABCDEFGHIJKLMNOPQRSTU'.split('');
const widths = { A: 152, B: 193 };
const rowCount = 30;

const cells = {
    B1: 'Sample of buyers', C1: 5, E1: 'Cutomers', F1: 'fail',
    B2: 'Prob success', C2: '0.11', E2: 1, F2: '0.89',
    B3: 'Prob Fail', C3: '0.89', E3: 2, F3: '0.89',
    E4: 3, F4: '0.89',
    A5: 'A.', B5: '0.558', E5: 4, F5: '0.89',
    B6: '0.558', E6: 5, F6: '0.89',
    A8: 'B.', E8: 1, F8: '0.11',
    E9: 2, F9: '0.11',
    B10: '0.09651173', E10: 3, F10: '0.89',
    A12: 'C.', B12: 'same answer as B', E12: 4, F12: '0.89',
    A13: 'D.', B13: 'E(X)', C13: 'N', D13: 'Prob', E13: 5, F13: '0.89',
    B14: '0.558', C14: 5, D14: '0.11', E14: 1, F14: '0.11',
    A15: 'E(X)', B15: '0.5500', C15: '0.49662', D15: '0.704713', E15: 2, F15: '0.11',
    G15: 'F. Expected value of sales in a week in variance/std dev in a week',
    C16: 'variance ^', D16: 'std dev^',
    A17: 'E.', B17: '2.75', E17: 3, F17: '0.11',
    A18: 'Expected revenue', B18: '2197.25', E18: 4, F18: '0.11',
    E19: 5, F19: '0.11',
    A20: 'F.', B20: '2.75', C20: 'E(X)',
    B21: '12.4155', C21: 'Variance for a week',
    B22: '3.523563537', C22: 'std dev'
};

const styles = {
    fill: ['A5', 'B5', 'B6', 'A8', 'B10', 'A12', 'B12', 'B15', 'B16', 'D15', 'D16', 'A18', 'B18'],
    bold: ['A5', 'B5', 'B12', 'B15', 'D15', 'D16', 'B18'],
    spill: ['A9', 'B9', 'A11', 'B11', 'G15', 'H15', 'I15', 'J15', 'K15', 'C21'],
    open: ['B8'],
    active: ['F15']
};

const grid = document.getElementById('grid');

// column widths, the last column takes what is left
let html = '<colgroup><col style="width:34px">';
columns.forEach(c => {
    html += c === 'U' ? '<col>' : `<col style="width:${widths[c] || 80}px">`;
});
html += '</colgroup><thead><tr><th class="corner"></th>';
columns.forEach(c => {
    html += `<th class="${c === 'F' ? 'hot' : ''}">${c}</th>`;
});
html += '</tr></thead><tbody>';

for (let r = 1; r <= rowCount; r++) {
    html += `<tr><th class="${r === 15 ? 'hot' : ''}">${r}</th>`;
    columns.forEach(c => {
        const id = c + r;
        const value = cells[id] === undefined ? '' : cells[id];
        const names = Object.keys(styles).filter(name => styles[name].includes(id));
        if (value !== '' && !isNaN(value)) names.push('num');
        html += `<td class="${names.join(' ')}">${value}</td>`;
    });
    html += '</tr>';
}
grid.innerHTML = html + '</tbody>';
```
